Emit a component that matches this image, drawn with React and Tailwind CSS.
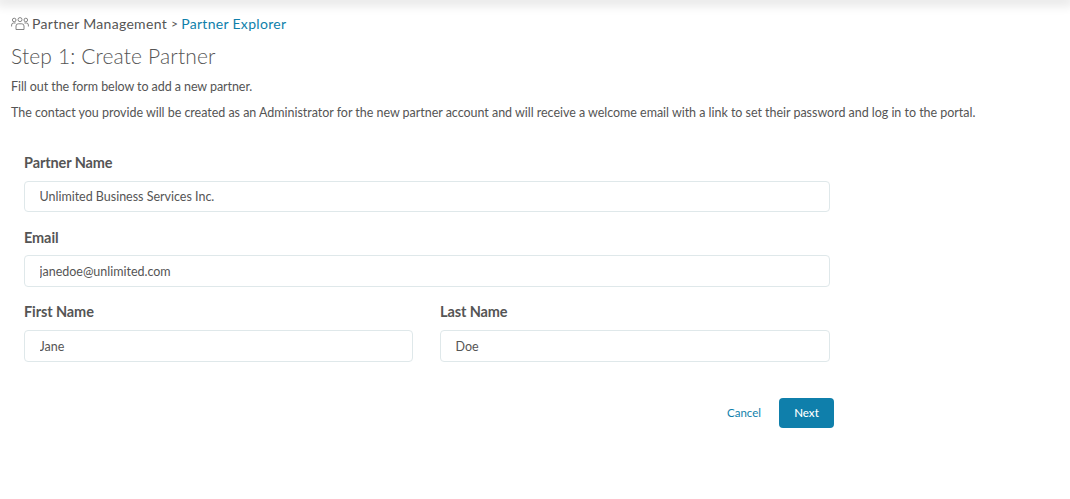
import React from "react";

function Field({ label, value, className = "", inputClass = "mt-[8px] h-[32px]" }) {
  return (
    <div className={className}>
      <label className="block h-[20px] text-[14.5px] leading-[20px] font-bold text-[#555555] tracking-[-0.1px]">{label}</label>
      <input
        readOnly
        value={value}
        className={`${inputClass} block w-full rounded-[4px] border border-[#dfe8ea] bg-white pl-[14.5px] text-[12.5px] tracking-[-0.01px] text-[#555555] outline-none`}
      />
    </div>
  );
}

function PeopleIcon() {
  return (
    <svg width="18" height="14" viewBox="0 0 18 14" fill="none" stroke="#777777" strokeWidth="0.9">
      <circle cx="3.2" cy="3" r="1.8" />
      <circle cx="9" cy="2.6" r="2" />
      <circle cx="14.8" cy="3" r="1.8" />
      <path d="M0.6 9.5V8a2 2 0 0 1 2-2h2" />
      <path d="M17.4 9.5V8a2 2 0 0 0-2-2h-2" />
      <path d="M5 12.5V9a2.2 2.2 0 0 1 2.2-2.2h3.6A2.2 2.2 0 0 1 13 9v3.5z" />
    </svg>
  );
}

export default function App() {
  return (
    <div className="h-[499px] w-[1070px] overflow-hidden bg-white font-['Lato',sans-serif] text-[#555555]">
      <div className="h-0 shadow-[0_0_12px_4px_rgba(0,0,0,0.14)]" />
      <div className="pl-[11px] pt-[15px]">
        <div className="flex h-[18px] items-center text-[14px] leading-[18px] tracking-[0.3px]">
          <PeopleIcon />
          <span className="ml-[3px]">Partner Management</span>
          <span className="ml-[4px] text-[12px]">&gt;</span>
          <span className="ml-[3px] text-[#0f7fab]">Partner Explorer</span>
        </div>
        <h1 className="mt-[9px] h-[28px] text-[21px] leading-[28px] font-light tracking-[0.15px] text-[#555555]">Step 1: Create Partner</h1>
        <p className="mt-[9px] text-[12.5px] leading-[16px] tracking-[-0.07px]">Fill out the form below to add a new partner.</p>
        <p className="mt-[10px] text-[12.5px] leading-[16px] tracking-[-0.03px]">The contact you provide will be created as an Administrator for the new partner account and will receive a welcome email with a link to set their password and log in to the portal.</p>
      </div>
      <form className="ml-[24px] mt-[32px] w-[806px]">
        <Field label="Partner Name" value="Unlimited Business Services Inc." inputClass="mt-[8px] h-[31px]" />
        <Field label="Email" value="janedoe@unlimited.com" className="mt-[16px]" inputClass="mt-[7px] h-[32px]" />
        <div className="mt-[15px] flex gap-[27px]">
          <Field label="First Name" value="Jane" className="w-[389px]" />
          <Field label="Last Name" value="Doe" className="w-[390px]" />
        </div>
      </form>
      <div className="ml-[727px] mt-[36px] flex w-[107px] items-center justify-between">
        <a className="text-[11.5px] text-[#0f7fab]">Cancel</a>
        <button className="h-[30px] w-[55px] rounded-[4px] bg-[#0f7fab] text-[11.5px] font-medium text-white">Next</button>
      </div>
    </div>
  );
}
